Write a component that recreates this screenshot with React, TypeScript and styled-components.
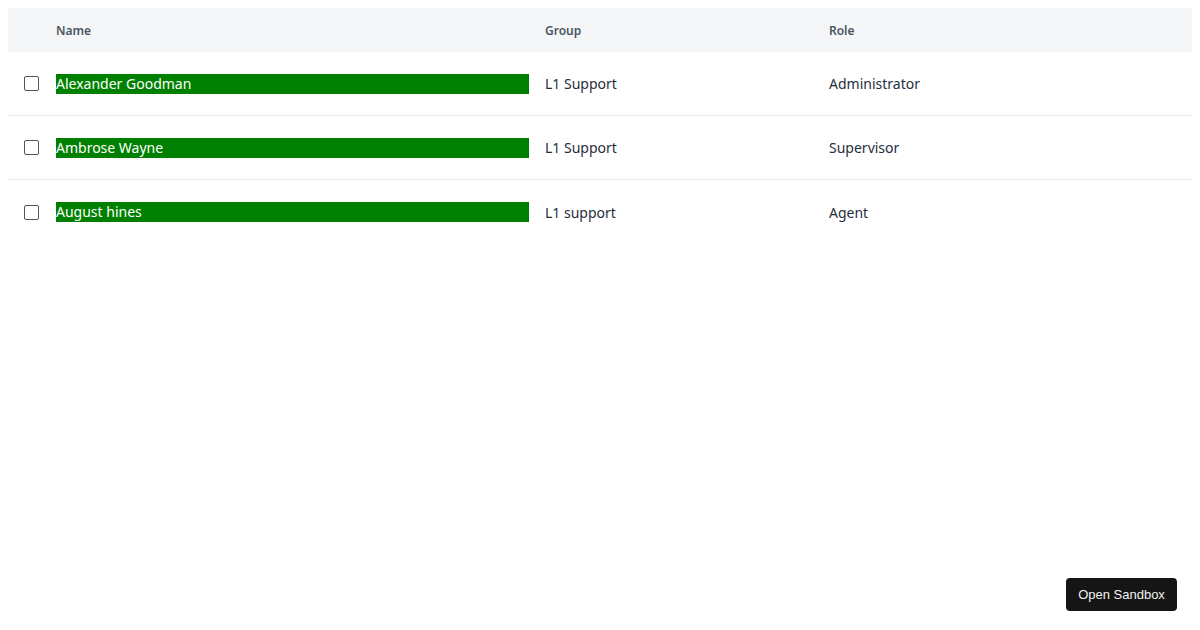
import React from 'react';
import styled, { createGlobalStyle } from 'styled-components';

const Global = createGlobalStyle`
  body {
    margin: 8px;
    font-family: 'Noto Sans', 'Open Sans', sans-serif;
    color: #1f2d3d;
    background: #fff;
  }
`;

const Table = styled.div`
  width: 100%;
`;

const Row = styled.div<{ $head?: boolean }>`
  display: grid;
  grid-template-columns: 40px 489px 284px 1fr;
  align-items: center;
  height: ${(p) => (p.$head ? '44px' : '64px')};
  background: ${(p) => (p.$head ? '#f5f6f8' : '#fff')};
  border-bottom: ${(p) => (p.$head ? 'none' : '1px solid #e8eaed')};
  box-sizing: border-box;
  &:last-child {
    border-bottom: none;
  }
`;

const Cell = styled.div<{ $head?: boolean }>`
  padding: 0 8px;
  font-size: ${(p) => (p.$head ? '12px' : '14px')};
  font-weight: ${(p) => (p.$head ? 600 : 400)};
  color: ${(p) => (p.$head ? '#4a5561' : '#1f2d3d')};
`;

const CheckCell = styled.div`
  padding-left: 16px;
  display: flex;
  align-items: center;
`;

const Check = styled.span`
  width: 13px;
  height: 13px;
  border: 1px solid #4a5561;
  border-radius: 2px;
  display: inline-block;
`;

const NameBar = styled.div`
  background: #008000;
  color: #fff;
  height: 20px;
  line-height: 20px;
  font-size: 14px;
`;

const SandboxButton = styled.button`
  position: fixed;
  right: 23px;
  bottom: 19px;
  width: 111px;
  height: 33px;
  border: none;
  border-radius: 4px;
  background: #151515;
  color: #f2f2f2;
  font-family: 'Liberation Sans', Arial, sans-serif;
  font-size: 13px;
`;

const rows = [
  { name: 'Alexander Goodman', group: 'L1 Support', role: 'Administrator' },
  { name: 'Ambrose Wayne', group: 'L1 Support', role: 'Supervisor' },
  { name: 'August hines', group: 'L1 support', role: 'Agent' },
];

const App = () => (
  <>
    <Global />
    <Table>
      <Row $head>
        <div />
        <Cell $head>Name</Cell>
        <Cell $head>Group</Cell>
        <Cell $head>Role</Cell>
      </Row>
      {rows.map((r) => (
        <Row key={r.name}>
          <CheckCell>
            <Check />
          </CheckCell>
          <Cell>
            <NameBar>{r.name}</NameBar>
          </Cell>
          <Cell>{r.group}</Cell>
          <Cell>{r.role}</Cell>
        </Row>
      ))}
    </Table>
    <SandboxButton>Open Sandbox</SandboxButton>
  </>
);

export default App;
